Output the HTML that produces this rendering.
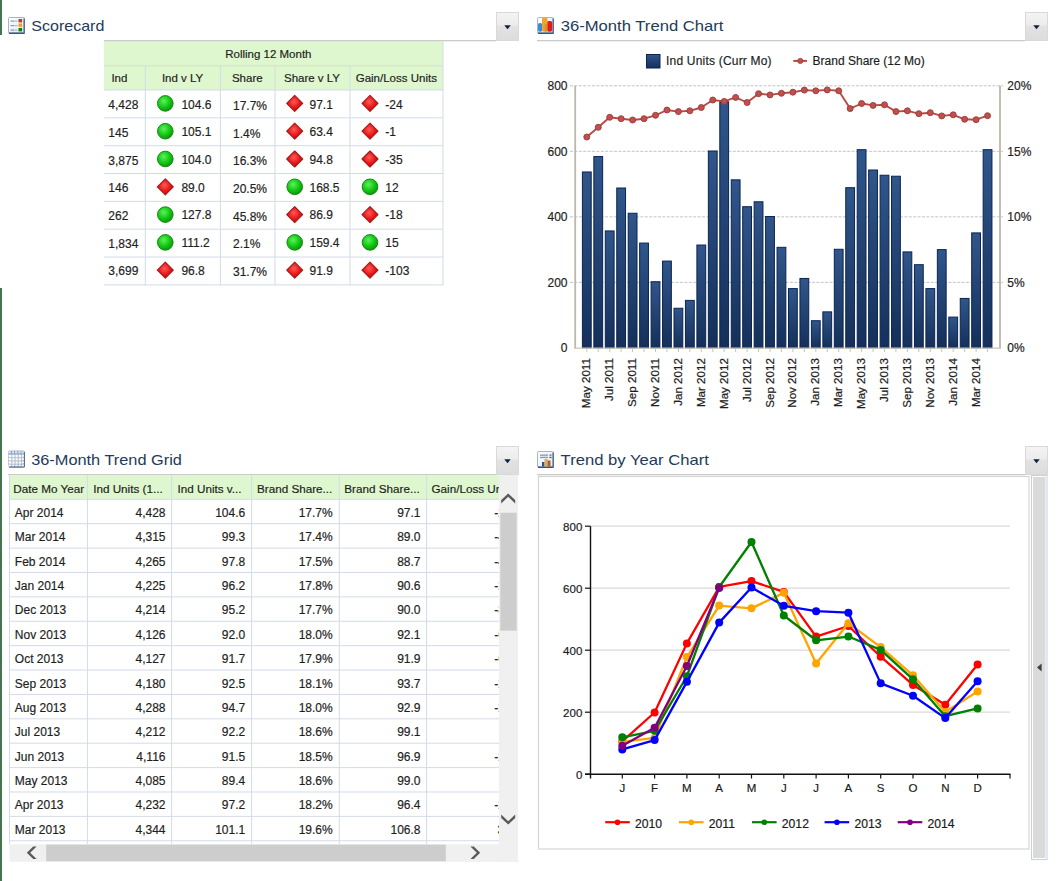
<!DOCTYPE html>
<html><head><meta charset="utf-8"><title>Dashboard</title>
<style>html,body{margin:0;padding:0;background:#fff;width:1057px;height:881px;overflow:hidden;position:relative;font-family:"Liberation Sans",sans-serif;}</style>
</head><body>
<svg width="1057" height="881" viewBox="0 0 1057 881" font-family="Liberation Sans, sans-serif" style="position:absolute;left:0;top:0">
<defs>
<linearGradient id="ddg" x1="0" y1="0" x2="0" y2="1">
<stop offset="0" stop-color="#f4f4f4"/><stop offset="0.45" stop-color="#ececec"/><stop offset="0.5" stop-color="#e2e2e2"/><stop offset="1" stop-color="#dcdcdc"/></linearGradient>
<linearGradient id="icbg" x1="0" y1="0" x2="1" y2="1">
<stop offset="0" stop-color="#ffffff"/><stop offset="1" stop-color="#dce8f6"/></linearGradient>
<linearGradient id="barg" x1="0" y1="0" x2="0" y2="1">
<stop offset="0" stop-color="#30568b"/><stop offset="1" stop-color="#14305a"/></linearGradient>
<radialGradient id="gcir" cx="0.4" cy="0.35" r="0.65">
<stop offset="0" stop-color="#5cf25c"/><stop offset="0.6" stop-color="#14c814"/><stop offset="1" stop-color="#0a9a0a"/></radialGradient>
<radialGradient id="rdia" cx="0.45" cy="0.4" r="0.6">
<stop offset="0" stop-color="#ff5a5a"/><stop offset="0.6" stop-color="#e81818"/><stop offset="1" stop-color="#b80c0c"/></radialGradient>
</defs>
<rect width="1057" height="881" fill="#ffffff"/>
<rect x="0" y="0" width="2" height="35" fill="#457550"/>
<rect x="0" y="288" width="2" height="593" fill="#457550"/>
<rect x="8.5" y="17.5" width="16" height="16" rx="1.2" fill="url(#icbg)" stroke="#a7b5c8" stroke-width="1"/>
<rect x="9" y="32.4" width="15.5" height="1.6" fill="#3b5379"/>
<rect x="23.4" y="18.5" width="1.6" height="15" fill="#5a6f92"/>
<rect x="18.5" y="19" width="3.6" height="3.4" fill="#c0392b"/>
<rect x="18.5" y="23.5" width="3.6" height="3.4" fill="#f0a020"/>
<rect x="18.5" y="28" width="3.6" height="3.4" fill="#1a7a1a"/>
<rect x="10.5" y="20.5" width="4" height="1.2" fill="#8a98aa"/><rect x="15" y="20.5" width="2.5" height="1.2" fill="#b0bac8"/>
<rect x="10.5" y="25" width="4" height="1.2" fill="#8a98aa"/><rect x="15" y="25" width="2.5" height="1.2" fill="#b0bac8"/>
<rect x="10.5" y="29.5" width="4" height="1.2" fill="#8a98aa"/><rect x="15" y="29.5" width="2.5" height="1.2" fill="#b0bac8"/>
<text x="0" y="0" font-size="14" fill="#233b5a" transform="translate(31.2,30.8) scale(1.148,1)">Scorecard</text>
<rect x="104" y="40" width="392" height="1.3" fill="#cbcbcb"/>
<rect x="104" y="41.2" width="339" height="0.9" fill="#cdd5e3"/>
<rect x="496" y="12" width="23" height="29" fill="url(#ddg)"/>
<rect x="496.5" y="12.5" width="22" height="28" fill="none" stroke="#d9d9d9" stroke-width="1"/>
<path d="M504.30 25.28 L510.70 25.28 L507.50 29.28 Z" fill="#0f1f45"/>
<rect x="104" y="41.3" width="339" height="48.7" fill="#dff7cf"/>
<rect x="104" y="65.2" width="339" height="1" fill="#d3dbe8"/>
<rect x="104" y="89.50" width="339" height="1" fill="#d3dbe8"/>
<rect x="104" y="117.34" width="339" height="1" fill="#d3dbe8"/>
<rect x="104" y="145.18" width="339" height="1" fill="#d3dbe8"/>
<rect x="104" y="173.02" width="339" height="1" fill="#d3dbe8"/>
<rect x="104" y="200.86" width="339" height="1" fill="#d3dbe8"/>
<rect x="104" y="228.70" width="339" height="1" fill="#d3dbe8"/>
<rect x="104" y="256.54" width="339" height="1" fill="#d3dbe8"/>
<rect x="104" y="284.38" width="339" height="1" fill="#d3dbe8"/>
<rect x="144.80" y="65.5" width="1" height="219.88" fill="#d3dbe8"/>
<rect x="219.90" y="65.5" width="1" height="219.88" fill="#d3dbe8"/>
<rect x="274.50" y="65.5" width="1" height="219.88" fill="#d3dbe8"/>
<rect x="349.50" y="65.5" width="1" height="219.88" fill="#d3dbe8"/>
<rect x="442.50" y="65.5" width="1" height="219.88" fill="#d3dbe8"/>
<rect x="442.5" y="41.3" width="1" height="24.5" fill="#d3dbe8"/>
<text x="225.20" y="58.00" font-size="11.5" fill="#1e1e1e" stroke="#1e1e1e" stroke-width="0.18" text-anchor="start" >Rolling 12 Month</text>
<text x="111.40" y="82.30" font-size="11.5" fill="#1e1e1e" stroke="#1e1e1e" stroke-width="0.18" text-anchor="start" >Ind</text>
<text x="182.60" y="82.30" font-size="11.5" fill="#1e1e1e" stroke="#1e1e1e" stroke-width="0.18" text-anchor="middle" >Ind v LY</text>
<text x="247.30" y="82.30" font-size="11.5" fill="#1e1e1e" stroke="#1e1e1e" stroke-width="0.18" text-anchor="middle" >Share</text>
<text x="312.00" y="82.30" font-size="11.5" fill="#1e1e1e" stroke="#1e1e1e" stroke-width="0.18" text-anchor="middle" >Share v LY</text>
<text x="396.30" y="82.30" font-size="11.5" fill="#1e1e1e" stroke="#1e1e1e" stroke-width="0.18" text-anchor="middle" >Gain/Loss Units</text>
<text x="108.30" y="109.40" font-size="12" fill="#1e1e1e" stroke="#1e1e1e" stroke-width="0.18" text-anchor="start" >4,428</text>
<circle cx="165.30" cy="103.40" r="7.8" fill="url(#gcir)" stroke="#138a13" stroke-width="1"/>
<text x="181.40" y="108.80" font-size="12" fill="#1e1e1e" stroke="#1e1e1e" stroke-width="0.18" text-anchor="start" >104.6</text>
<text x="233.00" y="110.00" font-size="12" fill="#1e1e1e" stroke="#1e1e1e" stroke-width="0.18" text-anchor="start" >17.7%</text>
<path d="M294.70 95.40 L302.70 103.40 L294.70 111.40 L286.70 103.40 Z" fill="url(#rdia)" stroke="#a81818" stroke-width="1.1" stroke-linejoin="round"/>
<text x="309.50" y="108.80" font-size="12" fill="#1e1e1e" stroke="#1e1e1e" stroke-width="0.18" text-anchor="start" >97.1</text>
<path d="M370.00 95.40 L378.00 103.40 L370.00 111.40 L362.00 103.40 Z" fill="url(#rdia)" stroke="#a81818" stroke-width="1.1" stroke-linejoin="round"/>
<text x="385.30" y="108.80" font-size="12" fill="#1e1e1e" stroke="#1e1e1e" stroke-width="0.18" text-anchor="start" >-24</text>
<text x="108.30" y="137.05" font-size="12" fill="#1e1e1e" stroke="#1e1e1e" stroke-width="0.18" text-anchor="start" >145</text>
<circle cx="165.30" cy="131.20" r="7.8" fill="url(#gcir)" stroke="#138a13" stroke-width="1"/>
<text x="181.40" y="136.45" font-size="12" fill="#1e1e1e" stroke="#1e1e1e" stroke-width="0.18" text-anchor="start" >105.1</text>
<text x="233.00" y="137.65" font-size="12" fill="#1e1e1e" stroke="#1e1e1e" stroke-width="0.18" text-anchor="start" >1.4%</text>
<path d="M294.70 123.20 L302.70 131.20 L294.70 139.20 L286.70 131.20 Z" fill="url(#rdia)" stroke="#a81818" stroke-width="1.1" stroke-linejoin="round"/>
<text x="309.50" y="136.45" font-size="12" fill="#1e1e1e" stroke="#1e1e1e" stroke-width="0.18" text-anchor="start" >63.4</text>
<path d="M370.00 123.20 L378.00 131.20 L370.00 139.20 L362.00 131.20 Z" fill="url(#rdia)" stroke="#a81818" stroke-width="1.1" stroke-linejoin="round"/>
<text x="385.30" y="136.45" font-size="12" fill="#1e1e1e" stroke="#1e1e1e" stroke-width="0.18" text-anchor="start" >-1</text>
<text x="108.30" y="164.70" font-size="12" fill="#1e1e1e" stroke="#1e1e1e" stroke-width="0.18" text-anchor="start" >3,875</text>
<circle cx="165.30" cy="159.00" r="7.8" fill="url(#gcir)" stroke="#138a13" stroke-width="1"/>
<text x="181.40" y="164.10" font-size="12" fill="#1e1e1e" stroke="#1e1e1e" stroke-width="0.18" text-anchor="start" >104.0</text>
<text x="233.00" y="165.30" font-size="12" fill="#1e1e1e" stroke="#1e1e1e" stroke-width="0.18" text-anchor="start" >16.3%</text>
<path d="M294.70 151.00 L302.70 159.00 L294.70 167.00 L286.70 159.00 Z" fill="url(#rdia)" stroke="#a81818" stroke-width="1.1" stroke-linejoin="round"/>
<text x="309.50" y="164.10" font-size="12" fill="#1e1e1e" stroke="#1e1e1e" stroke-width="0.18" text-anchor="start" >94.8</text>
<path d="M370.00 151.00 L378.00 159.00 L370.00 167.00 L362.00 159.00 Z" fill="url(#rdia)" stroke="#a81818" stroke-width="1.1" stroke-linejoin="round"/>
<text x="385.30" y="164.10" font-size="12" fill="#1e1e1e" stroke="#1e1e1e" stroke-width="0.18" text-anchor="start" >-35</text>
<text x="108.30" y="192.35" font-size="12" fill="#1e1e1e" stroke="#1e1e1e" stroke-width="0.18" text-anchor="start" >146</text>
<path d="M165.30 178.80 L173.30 186.80 L165.30 194.80 L157.30 186.80 Z" fill="url(#rdia)" stroke="#a81818" stroke-width="1.1" stroke-linejoin="round"/>
<text x="181.40" y="191.75" font-size="12" fill="#1e1e1e" stroke="#1e1e1e" stroke-width="0.18" text-anchor="start" >89.0</text>
<text x="233.00" y="192.95" font-size="12" fill="#1e1e1e" stroke="#1e1e1e" stroke-width="0.18" text-anchor="start" >20.5%</text>
<circle cx="294.70" cy="186.80" r="7.8" fill="url(#gcir)" stroke="#138a13" stroke-width="1"/>
<text x="309.50" y="191.75" font-size="12" fill="#1e1e1e" stroke="#1e1e1e" stroke-width="0.18" text-anchor="start" >168.5</text>
<circle cx="370.00" cy="186.80" r="7.8" fill="url(#gcir)" stroke="#138a13" stroke-width="1"/>
<text x="385.30" y="191.75" font-size="12" fill="#1e1e1e" stroke="#1e1e1e" stroke-width="0.18" text-anchor="start" >12</text>
<text x="108.30" y="220.00" font-size="12" fill="#1e1e1e" stroke="#1e1e1e" stroke-width="0.18" text-anchor="start" >262</text>
<circle cx="165.30" cy="214.60" r="7.8" fill="url(#gcir)" stroke="#138a13" stroke-width="1"/>
<text x="181.40" y="219.40" font-size="12" fill="#1e1e1e" stroke="#1e1e1e" stroke-width="0.18" text-anchor="start" >127.8</text>
<text x="233.00" y="220.60" font-size="12" fill="#1e1e1e" stroke="#1e1e1e" stroke-width="0.18" text-anchor="start" >45.8%</text>
<path d="M294.70 206.60 L302.70 214.60 L294.70 222.60 L286.70 214.60 Z" fill="url(#rdia)" stroke="#a81818" stroke-width="1.1" stroke-linejoin="round"/>
<text x="309.50" y="219.40" font-size="12" fill="#1e1e1e" stroke="#1e1e1e" stroke-width="0.18" text-anchor="start" >86.9</text>
<path d="M370.00 206.60 L378.00 214.60 L370.00 222.60 L362.00 214.60 Z" fill="url(#rdia)" stroke="#a81818" stroke-width="1.1" stroke-linejoin="round"/>
<text x="385.30" y="219.40" font-size="12" fill="#1e1e1e" stroke="#1e1e1e" stroke-width="0.18" text-anchor="start" >-18</text>
<text x="108.30" y="247.65" font-size="12" fill="#1e1e1e" stroke="#1e1e1e" stroke-width="0.18" text-anchor="start" >1,834</text>
<circle cx="165.30" cy="242.40" r="7.8" fill="url(#gcir)" stroke="#138a13" stroke-width="1"/>
<text x="181.40" y="247.05" font-size="12" fill="#1e1e1e" stroke="#1e1e1e" stroke-width="0.18" text-anchor="start" >111.2</text>
<text x="233.00" y="248.25" font-size="12" fill="#1e1e1e" stroke="#1e1e1e" stroke-width="0.18" text-anchor="start" >2.1%</text>
<circle cx="294.70" cy="242.40" r="7.8" fill="url(#gcir)" stroke="#138a13" stroke-width="1"/>
<text x="309.50" y="247.05" font-size="12" fill="#1e1e1e" stroke="#1e1e1e" stroke-width="0.18" text-anchor="start" >159.4</text>
<circle cx="370.00" cy="242.40" r="7.8" fill="url(#gcir)" stroke="#138a13" stroke-width="1"/>
<text x="385.30" y="247.05" font-size="12" fill="#1e1e1e" stroke="#1e1e1e" stroke-width="0.18" text-anchor="start" >15</text>
<text x="108.30" y="275.30" font-size="12" fill="#1e1e1e" stroke="#1e1e1e" stroke-width="0.18" text-anchor="start" >3,699</text>
<path d="M165.30 262.20 L173.30 270.20 L165.30 278.20 L157.30 270.20 Z" fill="url(#rdia)" stroke="#a81818" stroke-width="1.1" stroke-linejoin="round"/>
<text x="181.40" y="274.70" font-size="12" fill="#1e1e1e" stroke="#1e1e1e" stroke-width="0.18" text-anchor="start" >96.8</text>
<text x="233.00" y="275.90" font-size="12" fill="#1e1e1e" stroke="#1e1e1e" stroke-width="0.18" text-anchor="start" >31.7%</text>
<path d="M294.70 262.20 L302.70 270.20 L294.70 278.20 L286.70 270.20 Z" fill="url(#rdia)" stroke="#a81818" stroke-width="1.1" stroke-linejoin="round"/>
<text x="309.50" y="274.70" font-size="12" fill="#1e1e1e" stroke="#1e1e1e" stroke-width="0.18" text-anchor="start" >91.9</text>
<path d="M370.00 262.20 L378.00 270.20 L370.00 278.20 L362.00 270.20 Z" fill="url(#rdia)" stroke="#a81818" stroke-width="1.1" stroke-linejoin="round"/>
<text x="385.30" y="274.70" font-size="12" fill="#1e1e1e" stroke="#1e1e1e" stroke-width="0.18" text-anchor="start" >-103</text>
<rect x="537.5" y="17.5" width="16" height="16" rx="1.2" fill="url(#icbg)" stroke="#a7b5c8" stroke-width="1"/>
<rect x="538" y="32.4" width="15.5" height="1.6" fill="#3b5379"/>
<rect x="552.4" y="18.5" width="1.6" height="15" fill="#5a6f92"/>
<rect x="538" y="23" width="4.2" height="8.8" rx="1.8" fill="#3a8ad8"/>
<rect x="547" y="21" width="5.2" height="10.8" rx="1.8" fill="#e21a1a"/>
<rect x="542" y="17.5" width="5.5" height="14.3" rx="1.8" fill="#f0a428"/>
<rect x="544.8" y="24" width="2.2" height="7.5" fill="#c08a40" opacity="0.7"/>
<text x="0" y="0" font-size="14" fill="#233b5a" transform="translate(560.7,31) scale(1.189,1)">36-Month Trend Chart</text>
<rect x="537" y="40" width="488" height="1.3" fill="#cbcbcb"/>
<rect x="1025" y="12" width="23" height="29" fill="url(#ddg)"/>
<rect x="1025.5" y="12.5" width="22" height="28" fill="none" stroke="#d9d9d9" stroke-width="1"/>
<path d="M1033.30 25.28 L1039.70 25.28 L1036.50 29.28 Z" fill="#0f1f45"/>
<rect x="646.5" y="54.5" width="13.5" height="13.5" fill="url(#barg)" stroke="#0b2450" stroke-width="1"/>
<text x="666.00" y="64.90" font-size="12" fill="#1e1e1e" stroke="#1e1e1e" stroke-width="0.18" text-anchor="start" letter-spacing="0.2">Ind Units (Curr Mo)</text>
<line x1="793.3" y1="60.9" x2="807" y2="60.9" stroke="#b84a47" stroke-width="2"/>
<circle cx="800.3" cy="60.9" r="2.6" fill="#c0504d" stroke="#8c3533" stroke-width="0.6"/>
<text x="812.60" y="64.90" font-size="12" fill="#1e1e1e" stroke="#1e1e1e" stroke-width="0.18" text-anchor="start" >Brand Share (12 Mo)</text>
<line x1="570" y1="85.80" x2="1003" y2="85.80" stroke="#c4c4c4" stroke-width="1" stroke-dasharray="3,1.4"/>
<text x="567.50" y="90.10" font-size="12" fill="#1e1e1e" stroke="#1e1e1e" stroke-width="0.18" text-anchor="end" >800</text>
<line x1="570" y1="151.33" x2="1003" y2="151.33" stroke="#c4c4c4" stroke-width="1" stroke-dasharray="3,1.4"/>
<text x="567.50" y="155.63" font-size="12" fill="#1e1e1e" stroke="#1e1e1e" stroke-width="0.18" text-anchor="end" >600</text>
<line x1="570" y1="216.85" x2="1003" y2="216.85" stroke="#c4c4c4" stroke-width="1" stroke-dasharray="3,1.4"/>
<text x="567.50" y="221.15" font-size="12" fill="#1e1e1e" stroke="#1e1e1e" stroke-width="0.18" text-anchor="end" >400</text>
<line x1="570" y1="282.38" x2="1003" y2="282.38" stroke="#c4c4c4" stroke-width="1" stroke-dasharray="3,1.4"/>
<text x="567.50" y="286.68" font-size="12" fill="#1e1e1e" stroke="#1e1e1e" stroke-width="0.18" text-anchor="end" >200</text>
<text x="567.50" y="352.20" font-size="12" fill="#1e1e1e" stroke="#1e1e1e" stroke-width="0.18" text-anchor="end" >0</text>
<text x="1007.30" y="90.10" font-size="12" fill="#1e1e1e" stroke="#1e1e1e" stroke-width="0.18" text-anchor="start" >20%</text>
<text x="1007.30" y="155.62" font-size="12" fill="#1e1e1e" stroke="#1e1e1e" stroke-width="0.18" text-anchor="start" >15%</text>
<text x="1007.30" y="221.15" font-size="12" fill="#1e1e1e" stroke="#1e1e1e" stroke-width="0.18" text-anchor="start" >10%</text>
<text x="1007.30" y="286.68" font-size="12" fill="#1e1e1e" stroke="#1e1e1e" stroke-width="0.18" text-anchor="start" >5%</text>
<text x="1007.30" y="352.20" font-size="12" fill="#1e1e1e" stroke="#1e1e1e" stroke-width="0.18" text-anchor="start" >0%</text>
<rect x="582.40" y="171.97" width="8.8" height="175.93" fill="url(#barg)" stroke="#0b2450" stroke-width="1"/>
<rect x="593.85" y="156.57" width="8.8" height="191.33" fill="url(#barg)" stroke="#0b2450" stroke-width="1"/>
<rect x="605.30" y="230.94" width="8.8" height="116.96" fill="url(#barg)" stroke="#0b2450" stroke-width="1"/>
<rect x="616.75" y="188.02" width="8.8" height="159.88" fill="url(#barg)" stroke="#0b2450" stroke-width="1"/>
<rect x="628.20" y="213.25" width="8.8" height="134.65" fill="url(#barg)" stroke="#0b2450" stroke-width="1"/>
<rect x="639.65" y="243.06" width="8.8" height="104.84" fill="url(#barg)" stroke="#0b2450" stroke-width="1"/>
<rect x="651.10" y="281.72" width="8.8" height="66.18" fill="url(#barg)" stroke="#0b2450" stroke-width="1"/>
<rect x="662.55" y="261.08" width="8.8" height="86.82" fill="url(#barg)" stroke="#0b2450" stroke-width="1"/>
<rect x="674.00" y="308.26" width="8.8" height="39.64" fill="url(#barg)" stroke="#0b2450" stroke-width="1"/>
<rect x="685.45" y="300.39" width="8.8" height="47.51" fill="url(#barg)" stroke="#0b2450" stroke-width="1"/>
<rect x="696.90" y="245.03" width="8.8" height="102.87" fill="url(#barg)" stroke="#0b2450" stroke-width="1"/>
<rect x="708.35" y="151.00" width="8.8" height="196.90" fill="url(#barg)" stroke="#0b2450" stroke-width="1"/>
<rect x="719.80" y="101.85" width="8.8" height="246.05" fill="url(#barg)" stroke="#0b2450" stroke-width="1"/>
<rect x="731.25" y="179.83" width="8.8" height="168.07" fill="url(#barg)" stroke="#0b2450" stroke-width="1"/>
<rect x="742.70" y="206.69" width="8.8" height="141.21" fill="url(#barg)" stroke="#0b2450" stroke-width="1"/>
<rect x="754.15" y="201.78" width="8.8" height="146.12" fill="url(#barg)" stroke="#0b2450" stroke-width="1"/>
<rect x="765.60" y="216.52" width="8.8" height="131.38" fill="url(#barg)" stroke="#0b2450" stroke-width="1"/>
<rect x="777.05" y="247.32" width="8.8" height="100.58" fill="url(#barg)" stroke="#0b2450" stroke-width="1"/>
<rect x="788.50" y="288.60" width="8.8" height="59.30" fill="url(#barg)" stroke="#0b2450" stroke-width="1"/>
<rect x="799.95" y="278.44" width="8.8" height="69.46" fill="url(#barg)" stroke="#0b2450" stroke-width="1"/>
<rect x="811.40" y="320.71" width="8.8" height="27.19" fill="url(#barg)" stroke="#0b2450" stroke-width="1"/>
<rect x="822.85" y="311.86" width="8.8" height="36.04" fill="url(#barg)" stroke="#0b2450" stroke-width="1"/>
<rect x="834.30" y="249.28" width="8.8" height="98.62" fill="url(#barg)" stroke="#0b2450" stroke-width="1"/>
<rect x="845.75" y="187.69" width="8.8" height="160.21" fill="url(#barg)" stroke="#0b2450" stroke-width="1"/>
<rect x="857.20" y="149.69" width="8.8" height="198.21" fill="url(#barg)" stroke="#0b2450" stroke-width="1"/>
<rect x="868.65" y="170.00" width="8.8" height="177.90" fill="url(#barg)" stroke="#0b2450" stroke-width="1"/>
<rect x="880.10" y="175.24" width="8.8" height="172.66" fill="url(#barg)" stroke="#0b2450" stroke-width="1"/>
<rect x="891.55" y="176.22" width="8.8" height="171.68" fill="url(#barg)" stroke="#0b2450" stroke-width="1"/>
<rect x="903.00" y="251.91" width="8.8" height="95.99" fill="url(#barg)" stroke="#0b2450" stroke-width="1"/>
<rect x="914.45" y="264.68" width="8.8" height="83.22" fill="url(#barg)" stroke="#0b2450" stroke-width="1"/>
<rect x="925.90" y="288.60" width="8.8" height="59.30" fill="url(#barg)" stroke="#0b2450" stroke-width="1"/>
<rect x="937.35" y="249.61" width="8.8" height="98.29" fill="url(#barg)" stroke="#0b2450" stroke-width="1"/>
<rect x="948.80" y="317.10" width="8.8" height="30.80" fill="url(#barg)" stroke="#0b2450" stroke-width="1"/>
<rect x="960.25" y="298.43" width="8.8" height="49.47" fill="url(#barg)" stroke="#0b2450" stroke-width="1"/>
<rect x="971.70" y="232.90" width="8.8" height="115.00" fill="url(#barg)" stroke="#0b2450" stroke-width="1"/>
<rect x="983.15" y="149.69" width="8.8" height="198.21" fill="url(#barg)" stroke="#0b2450" stroke-width="1"/>
<line x1="575.2" y1="85.80" x2="575.2" y2="348.40" stroke="#bdb8a8" stroke-width="1.8"/>
<line x1="1000" y1="85.80" x2="1000" y2="348.40" stroke="#bdb8a8" stroke-width="1.8"/>
<line x1="574.3" y1="348.20" x2="1001" y2="348.20" stroke="#cbc6b8" stroke-width="1.3"/>
<line x1="586.80" y1="348.5" x2="586.80" y2="352" stroke="#c8c3b4" stroke-width="1"/>
<line x1="598.25" y1="348.5" x2="598.25" y2="352" stroke="#c8c3b4" stroke-width="1"/>
<line x1="609.70" y1="348.5" x2="609.70" y2="352" stroke="#c8c3b4" stroke-width="1"/>
<line x1="621.15" y1="348.5" x2="621.15" y2="352" stroke="#c8c3b4" stroke-width="1"/>
<line x1="632.60" y1="348.5" x2="632.60" y2="352" stroke="#c8c3b4" stroke-width="1"/>
<line x1="644.05" y1="348.5" x2="644.05" y2="352" stroke="#c8c3b4" stroke-width="1"/>
<line x1="655.50" y1="348.5" x2="655.50" y2="352" stroke="#c8c3b4" stroke-width="1"/>
<line x1="666.95" y1="348.5" x2="666.95" y2="352" stroke="#c8c3b4" stroke-width="1"/>
<line x1="678.40" y1="348.5" x2="678.40" y2="352" stroke="#c8c3b4" stroke-width="1"/>
<line x1="689.85" y1="348.5" x2="689.85" y2="352" stroke="#c8c3b4" stroke-width="1"/>
<line x1="701.30" y1="348.5" x2="701.30" y2="352" stroke="#c8c3b4" stroke-width="1"/>
<line x1="712.75" y1="348.5" x2="712.75" y2="352" stroke="#c8c3b4" stroke-width="1"/>
<line x1="724.20" y1="348.5" x2="724.20" y2="352" stroke="#c8c3b4" stroke-width="1"/>
<line x1="735.65" y1="348.5" x2="735.65" y2="352" stroke="#c8c3b4" stroke-width="1"/>
<line x1="747.10" y1="348.5" x2="747.10" y2="352" stroke="#c8c3b4" stroke-width="1"/>
<line x1="758.55" y1="348.5" x2="758.55" y2="352" stroke="#c8c3b4" stroke-width="1"/>
<line x1="770.00" y1="348.5" x2="770.00" y2="352" stroke="#c8c3b4" stroke-width="1"/>
<line x1="781.45" y1="348.5" x2="781.45" y2="352" stroke="#c8c3b4" stroke-width="1"/>
<line x1="792.90" y1="348.5" x2="792.90" y2="352" stroke="#c8c3b4" stroke-width="1"/>
<line x1="804.35" y1="348.5" x2="804.35" y2="352" stroke="#c8c3b4" stroke-width="1"/>
<line x1="815.80" y1="348.5" x2="815.80" y2="352" stroke="#c8c3b4" stroke-width="1"/>
<line x1="827.25" y1="348.5" x2="827.25" y2="352" stroke="#c8c3b4" stroke-width="1"/>
<line x1="838.70" y1="348.5" x2="838.70" y2="352" stroke="#c8c3b4" stroke-width="1"/>
<line x1="850.15" y1="348.5" x2="850.15" y2="352" stroke="#c8c3b4" stroke-width="1"/>
<line x1="861.60" y1="348.5" x2="861.60" y2="352" stroke="#c8c3b4" stroke-width="1"/>
<line x1="873.05" y1="348.5" x2="873.05" y2="352" stroke="#c8c3b4" stroke-width="1"/>
<line x1="884.50" y1="348.5" x2="884.50" y2="352" stroke="#c8c3b4" stroke-width="1"/>
<line x1="895.95" y1="348.5" x2="895.95" y2="352" stroke="#c8c3b4" stroke-width="1"/>
<line x1="907.40" y1="348.5" x2="907.40" y2="352" stroke="#c8c3b4" stroke-width="1"/>
<line x1="918.85" y1="348.5" x2="918.85" y2="352" stroke="#c8c3b4" stroke-width="1"/>
<line x1="930.30" y1="348.5" x2="930.30" y2="352" stroke="#c8c3b4" stroke-width="1"/>
<line x1="941.75" y1="348.5" x2="941.75" y2="352" stroke="#c8c3b4" stroke-width="1"/>
<line x1="953.20" y1="348.5" x2="953.20" y2="352" stroke="#c8c3b4" stroke-width="1"/>
<line x1="964.65" y1="348.5" x2="964.65" y2="352" stroke="#c8c3b4" stroke-width="1"/>
<line x1="976.10" y1="348.5" x2="976.10" y2="352" stroke="#c8c3b4" stroke-width="1"/>
<line x1="987.55" y1="348.5" x2="987.55" y2="352" stroke="#c8c3b4" stroke-width="1"/>
<polyline points="586.80,137.00 598.25,127.30 609.70,117.30 621.15,118.70 632.60,120.00 644.05,118.70 655.50,115.30 666.95,110.00 678.40,111.60 689.85,110.80 701.30,107.50 712.75,100.00 724.20,101.40 735.65,97.40 747.10,102.50 758.55,93.70 770.00,94.90 781.45,93.30 792.90,92.20 804.35,90.10 815.80,90.80 827.25,89.90 838.70,90.80 850.15,108.60 861.60,103.50 873.05,105.40 884.50,104.80 895.95,111.60 907.40,110.80 918.85,113.70 930.30,112.70 941.75,115.90 953.20,114.80 964.65,119.30 976.10,119.70 987.55,115.70" fill="none" stroke="#b84a47" stroke-width="1.9" stroke-linejoin="round"/>
<circle cx="586.80" cy="137.00" r="3.0" fill="#c0504d" stroke="#973b38" stroke-width="0.9"/>
<circle cx="598.25" cy="127.30" r="3.0" fill="#c0504d" stroke="#973b38" stroke-width="0.9"/>
<circle cx="609.70" cy="117.30" r="3.0" fill="#c0504d" stroke="#973b38" stroke-width="0.9"/>
<circle cx="621.15" cy="118.70" r="3.0" fill="#c0504d" stroke="#973b38" stroke-width="0.9"/>
<circle cx="632.60" cy="120.00" r="3.0" fill="#c0504d" stroke="#973b38" stroke-width="0.9"/>
<circle cx="644.05" cy="118.70" r="3.0" fill="#c0504d" stroke="#973b38" stroke-width="0.9"/>
<circle cx="655.50" cy="115.30" r="3.0" fill="#c0504d" stroke="#973b38" stroke-width="0.9"/>
<circle cx="666.95" cy="110.00" r="3.0" fill="#c0504d" stroke="#973b38" stroke-width="0.9"/>
<circle cx="678.40" cy="111.60" r="3.0" fill="#c0504d" stroke="#973b38" stroke-width="0.9"/>
<circle cx="689.85" cy="110.80" r="3.0" fill="#c0504d" stroke="#973b38" stroke-width="0.9"/>
<circle cx="701.30" cy="107.50" r="3.0" fill="#c0504d" stroke="#973b38" stroke-width="0.9"/>
<circle cx="712.75" cy="100.00" r="3.0" fill="#c0504d" stroke="#973b38" stroke-width="0.9"/>
<circle cx="724.20" cy="101.40" r="3.0" fill="#c0504d" stroke="#973b38" stroke-width="0.9"/>
<circle cx="735.65" cy="97.40" r="3.0" fill="#c0504d" stroke="#973b38" stroke-width="0.9"/>
<circle cx="747.10" cy="102.50" r="3.0" fill="#c0504d" stroke="#973b38" stroke-width="0.9"/>
<circle cx="758.55" cy="93.70" r="3.0" fill="#c0504d" stroke="#973b38" stroke-width="0.9"/>
<circle cx="770.00" cy="94.90" r="3.0" fill="#c0504d" stroke="#973b38" stroke-width="0.9"/>
<circle cx="781.45" cy="93.30" r="3.0" fill="#c0504d" stroke="#973b38" stroke-width="0.9"/>
<circle cx="792.90" cy="92.20" r="3.0" fill="#c0504d" stroke="#973b38" stroke-width="0.9"/>
<circle cx="804.35" cy="90.10" r="3.0" fill="#c0504d" stroke="#973b38" stroke-width="0.9"/>
<circle cx="815.80" cy="90.80" r="3.0" fill="#c0504d" stroke="#973b38" stroke-width="0.9"/>
<circle cx="827.25" cy="89.90" r="3.0" fill="#c0504d" stroke="#973b38" stroke-width="0.9"/>
<circle cx="838.70" cy="90.80" r="3.0" fill="#c0504d" stroke="#973b38" stroke-width="0.9"/>
<circle cx="850.15" cy="108.60" r="3.0" fill="#c0504d" stroke="#973b38" stroke-width="0.9"/>
<circle cx="861.60" cy="103.50" r="3.0" fill="#c0504d" stroke="#973b38" stroke-width="0.9"/>
<circle cx="873.05" cy="105.40" r="3.0" fill="#c0504d" stroke="#973b38" stroke-width="0.9"/>
<circle cx="884.50" cy="104.80" r="3.0" fill="#c0504d" stroke="#973b38" stroke-width="0.9"/>
<circle cx="895.95" cy="111.60" r="3.0" fill="#c0504d" stroke="#973b38" stroke-width="0.9"/>
<circle cx="907.40" cy="110.80" r="3.0" fill="#c0504d" stroke="#973b38" stroke-width="0.9"/>
<circle cx="918.85" cy="113.70" r="3.0" fill="#c0504d" stroke="#973b38" stroke-width="0.9"/>
<circle cx="930.30" cy="112.70" r="3.0" fill="#c0504d" stroke="#973b38" stroke-width="0.9"/>
<circle cx="941.75" cy="115.90" r="3.0" fill="#c0504d" stroke="#973b38" stroke-width="0.9"/>
<circle cx="953.20" cy="114.80" r="3.0" fill="#c0504d" stroke="#973b38" stroke-width="0.9"/>
<circle cx="964.65" cy="119.30" r="3.0" fill="#c0504d" stroke="#973b38" stroke-width="0.9"/>
<circle cx="976.10" cy="119.70" r="3.0" fill="#c0504d" stroke="#973b38" stroke-width="0.9"/>
<circle cx="987.55" cy="115.70" r="3.0" fill="#c0504d" stroke="#973b38" stroke-width="0.9"/>
<text x="0" y="0" font-size="11.6" fill="#1e1e1e" stroke="#1e1e1e" stroke-width="0.22" text-anchor="end" transform="translate(590.30,358.1) rotate(-90)">May 2011</text>
<text x="0" y="0" font-size="11.6" fill="#1e1e1e" stroke="#1e1e1e" stroke-width="0.22" text-anchor="end" transform="translate(613.20,358.1) rotate(-90)">Jul 2011</text>
<text x="0" y="0" font-size="11.6" fill="#1e1e1e" stroke="#1e1e1e" stroke-width="0.22" text-anchor="end" transform="translate(636.10,358.1) rotate(-90)">Sep 2011</text>
<text x="0" y="0" font-size="11.6" fill="#1e1e1e" stroke="#1e1e1e" stroke-width="0.22" text-anchor="end" transform="translate(659.00,358.1) rotate(-90)">Nov 2011</text>
<text x="0" y="0" font-size="11.6" fill="#1e1e1e" stroke="#1e1e1e" stroke-width="0.22" text-anchor="end" transform="translate(681.90,358.1) rotate(-90)">Jan 2012</text>
<text x="0" y="0" font-size="11.6" fill="#1e1e1e" stroke="#1e1e1e" stroke-width="0.22" text-anchor="end" transform="translate(704.80,358.1) rotate(-90)">Mar 2012</text>
<text x="0" y="0" font-size="11.6" fill="#1e1e1e" stroke="#1e1e1e" stroke-width="0.22" text-anchor="end" transform="translate(727.70,358.1) rotate(-90)">May 2012</text>
<text x="0" y="0" font-size="11.6" fill="#1e1e1e" stroke="#1e1e1e" stroke-width="0.22" text-anchor="end" transform="translate(750.60,358.1) rotate(-90)">Jul 2012</text>
<text x="0" y="0" font-size="11.6" fill="#1e1e1e" stroke="#1e1e1e" stroke-width="0.22" text-anchor="end" transform="translate(773.50,358.1) rotate(-90)">Sep 2012</text>
<text x="0" y="0" font-size="11.6" fill="#1e1e1e" stroke="#1e1e1e" stroke-width="0.22" text-anchor="end" transform="translate(796.40,358.1) rotate(-90)">Nov 2012</text>
<text x="0" y="0" font-size="11.6" fill="#1e1e1e" stroke="#1e1e1e" stroke-width="0.22" text-anchor="end" transform="translate(819.30,358.1) rotate(-90)">Jan 2013</text>
<text x="0" y="0" font-size="11.6" fill="#1e1e1e" stroke="#1e1e1e" stroke-width="0.22" text-anchor="end" transform="translate(842.20,358.1) rotate(-90)">Mar 2013</text>
<text x="0" y="0" font-size="11.6" fill="#1e1e1e" stroke="#1e1e1e" stroke-width="0.22" text-anchor="end" transform="translate(865.10,358.1) rotate(-90)">May 2013</text>
<text x="0" y="0" font-size="11.6" fill="#1e1e1e" stroke="#1e1e1e" stroke-width="0.22" text-anchor="end" transform="translate(888.00,358.1) rotate(-90)">Jul 2013</text>
<text x="0" y="0" font-size="11.6" fill="#1e1e1e" stroke="#1e1e1e" stroke-width="0.22" text-anchor="end" transform="translate(910.90,358.1) rotate(-90)">Sep 2013</text>
<text x="0" y="0" font-size="11.6" fill="#1e1e1e" stroke="#1e1e1e" stroke-width="0.22" text-anchor="end" transform="translate(933.80,358.1) rotate(-90)">Nov 2013</text>
<text x="0" y="0" font-size="11.6" fill="#1e1e1e" stroke="#1e1e1e" stroke-width="0.22" text-anchor="end" transform="translate(956.70,358.1) rotate(-90)">Jan 2014</text>
<text x="0" y="0" font-size="11.6" fill="#1e1e1e" stroke="#1e1e1e" stroke-width="0.22" text-anchor="end" transform="translate(979.60,358.1) rotate(-90)">Mar 2014</text>
<rect x="8.5" y="451.0" width="16" height="16" rx="1.2" fill="url(#icbg)" stroke="#a7b5c8" stroke-width="1"/>
<rect x="9" y="465.9" width="15.5" height="1.6" fill="#3b5379"/>
<rect x="23.4" y="452.0" width="1.6" height="15" fill="#5a6f92"/>
<rect x="9" y="451" width="15.2" height="3.4" fill="#6e9ad6"/>
<rect x="8.60" y="451.20" width="2.4" height="2.3" fill="#cfe6ff"/>
<rect x="8.60" y="454.45" width="2.4" height="2.3" fill="#ffffff"/>
<rect x="8.60" y="457.70" width="2.4" height="2.3" fill="#ffffff"/>
<rect x="8.60" y="460.95" width="2.4" height="2.3" fill="#ffffff"/>
<rect x="8.60" y="464.20" width="2.4" height="2.3" fill="#ffffff"/>
<rect x="11.80" y="451.20" width="2.4" height="2.3" fill="#cfe6ff"/>
<rect x="11.80" y="454.45" width="2.4" height="2.3" fill="#ffffff"/>
<rect x="11.80" y="457.70" width="2.4" height="2.3" fill="#ffffff"/>
<rect x="11.80" y="460.95" width="2.4" height="2.3" fill="#ffffff"/>
<rect x="11.80" y="464.20" width="2.4" height="2.3" fill="#ffffff"/>
<rect x="15.00" y="451.20" width="2.4" height="2.3" fill="#cfe6ff"/>
<rect x="15.00" y="454.45" width="2.4" height="2.3" fill="#ffffff"/>
<rect x="15.00" y="457.70" width="2.4" height="2.3" fill="#ffffff"/>
<rect x="15.00" y="460.95" width="2.4" height="2.3" fill="#ffffff"/>
<rect x="15.00" y="464.20" width="2.4" height="2.3" fill="#ffffff"/>
<rect x="18.20" y="451.20" width="2.4" height="2.3" fill="#cfe6ff"/>
<rect x="18.20" y="454.45" width="2.4" height="2.3" fill="#ffffff"/>
<rect x="18.20" y="457.70" width="2.4" height="2.3" fill="#ffffff"/>
<rect x="18.20" y="460.95" width="2.4" height="2.3" fill="#ffffff"/>
<rect x="18.20" y="464.20" width="2.4" height="2.3" fill="#ffffff"/>
<rect x="21.40" y="451.20" width="2.4" height="2.3" fill="#cfe6ff"/>
<rect x="21.40" y="454.45" width="2.4" height="2.3" fill="#ffffff"/>
<rect x="21.40" y="457.70" width="2.4" height="2.3" fill="#ffffff"/>
<rect x="21.40" y="460.95" width="2.4" height="2.3" fill="#ffffff"/>
<rect x="21.40" y="464.20" width="2.4" height="2.3" fill="#ffffff"/>
<rect x="11.40" y="454.4" width="0.9" height="12" fill="#aebacb"/>
<rect x="14.60" y="454.4" width="0.9" height="12" fill="#aebacb"/>
<rect x="17.80" y="454.4" width="0.9" height="12" fill="#aebacb"/>
<rect x="21.00" y="454.4" width="0.9" height="12" fill="#aebacb"/>
<rect x="9" y="454.05" width="15" height="0.9" fill="#aebacb"/>
<rect x="9" y="457.30" width="15" height="0.9" fill="#aebacb"/>
<rect x="9" y="460.55" width="15" height="0.9" fill="#aebacb"/>
<rect x="9" y="463.80" width="15" height="0.9" fill="#aebacb"/>
<text x="0" y="0" font-size="14" fill="#233b5a" transform="translate(31.2,464.8) scale(1.167,1)">36-Month Trend Grid</text>
<rect x="8" y="474" width="488" height="1.3" fill="#cbcbcb"/>
<rect x="496" y="446" width="23" height="29" fill="url(#ddg)"/>
<rect x="496.5" y="446.5" width="22" height="28" fill="none" stroke="#d9d9d9" stroke-width="1"/>
<path d="M504.30 459.28 L510.70 459.28 L507.50 463.28 Z" fill="#0f1f45"/>
<rect x="9.5" y="475.3" width="489.5" height="23.9" fill="#dff7cf"/>
<rect x="9.0" y="475.3" width="1" height="368.7" fill="#d3dbe8"/>
<rect x="9.5" y="498.80" width="489.5" height="1" fill="#d3dbe8"/>
<rect x="9.5" y="523.19" width="489.5" height="1" fill="#d3dbe8"/>
<rect x="9.5" y="547.58" width="489.5" height="1" fill="#d3dbe8"/>
<rect x="9.5" y="571.97" width="489.5" height="1" fill="#d3dbe8"/>
<rect x="9.5" y="596.36" width="489.5" height="1" fill="#d3dbe8"/>
<rect x="9.5" y="620.75" width="489.5" height="1" fill="#d3dbe8"/>
<rect x="9.5" y="645.14" width="489.5" height="1" fill="#d3dbe8"/>
<rect x="9.5" y="669.53" width="489.5" height="1" fill="#d3dbe8"/>
<rect x="9.5" y="693.92" width="489.5" height="1" fill="#d3dbe8"/>
<rect x="9.5" y="718.31" width="489.5" height="1" fill="#d3dbe8"/>
<rect x="9.5" y="742.70" width="489.5" height="1" fill="#d3dbe8"/>
<rect x="9.5" y="767.09" width="489.5" height="1" fill="#d3dbe8"/>
<rect x="9.5" y="791.48" width="489.5" height="1" fill="#d3dbe8"/>
<rect x="9.5" y="815.87" width="489.5" height="1" fill="#d3dbe8"/>
<rect x="9.5" y="840.26" width="489.5" height="1" fill="#d3dbe8"/>
<rect x="86.90" y="475.3" width="1" height="368.70" fill="#d3dbe8"/>
<rect x="171.10" y="475.3" width="1" height="368.70" fill="#d3dbe8"/>
<rect x="251.10" y="475.3" width="1" height="368.70" fill="#d3dbe8"/>
<rect x="338.80" y="475.3" width="1" height="368.70" fill="#d3dbe8"/>
<rect x="426.10" y="475.3" width="1" height="368.70" fill="#d3dbe8"/>
<clipPath id="gclip"><rect x="9" y="470" width="490" height="380"/></clipPath>
<g clip-path="url(#gclip)">
<text x="13.30" y="493.10" font-size="11.7" fill="#1e1e1e" stroke="#1e1e1e" stroke-width="0.18" text-anchor="start" >Date Mo Year</text>
<text x="93.20" y="493.10" font-size="11.7" fill="#1e1e1e" stroke="#1e1e1e" stroke-width="0.18" text-anchor="start" >Ind Units (1...</text>
<text x="177.50" y="493.10" font-size="11.7" fill="#1e1e1e" stroke="#1e1e1e" stroke-width="0.18" text-anchor="start" >Ind Units v...</text>
<text x="257.00" y="493.10" font-size="11.7" fill="#1e1e1e" stroke="#1e1e1e" stroke-width="0.18" text-anchor="start" >Brand Share...</text>
<text x="344.30" y="493.10" font-size="11.7" fill="#1e1e1e" stroke="#1e1e1e" stroke-width="0.18" text-anchor="start" >Brand Share...</text>
<text x="431.50" y="493.10" font-size="11.7" fill="#1e1e1e" stroke="#1e1e1e" stroke-width="0.18" text-anchor="start" >Gain/Loss Units</text>
<text x="14.80" y="517.10" font-size="12" fill="#1e1e1e" stroke="#1e1e1e" stroke-width="0.18" text-anchor="start" >Apr 2014</text>
<text x="165.50" y="517.10" font-size="12" fill="#1e1e1e" stroke="#1e1e1e" stroke-width="0.18" text-anchor="end" >4,428</text>
<text x="245.20" y="517.10" font-size="12" fill="#1e1e1e" stroke="#1e1e1e" stroke-width="0.18" text-anchor="end" >104.6</text>
<text x="332.70" y="517.10" font-size="12" fill="#1e1e1e" stroke="#1e1e1e" stroke-width="0.18" text-anchor="end" >17.7%</text>
<text x="420.50" y="517.10" font-size="12" fill="#1e1e1e" stroke="#1e1e1e" stroke-width="0.18" text-anchor="end" >97.1</text>
<text x="494.20" y="517.10" font-size="12" fill="#1e1e1e" stroke="#1e1e1e" stroke-width="0.18" text-anchor="start" >-24</text>
<text x="14.80" y="541.44" font-size="12" fill="#1e1e1e" stroke="#1e1e1e" stroke-width="0.18" text-anchor="start" >Mar 2014</text>
<text x="165.50" y="541.44" font-size="12" fill="#1e1e1e" stroke="#1e1e1e" stroke-width="0.18" text-anchor="end" >4,315</text>
<text x="245.20" y="541.44" font-size="12" fill="#1e1e1e" stroke="#1e1e1e" stroke-width="0.18" text-anchor="end" >99.3</text>
<text x="332.70" y="541.44" font-size="12" fill="#1e1e1e" stroke="#1e1e1e" stroke-width="0.18" text-anchor="end" >17.4%</text>
<text x="420.50" y="541.44" font-size="12" fill="#1e1e1e" stroke="#1e1e1e" stroke-width="0.18" text-anchor="end" >89.0</text>
<text x="494.20" y="541.44" font-size="12" fill="#1e1e1e" stroke="#1e1e1e" stroke-width="0.18" text-anchor="start" >-47</text>
<text x="14.80" y="565.79" font-size="12" fill="#1e1e1e" stroke="#1e1e1e" stroke-width="0.18" text-anchor="start" >Feb 2014</text>
<text x="165.50" y="565.79" font-size="12" fill="#1e1e1e" stroke="#1e1e1e" stroke-width="0.18" text-anchor="end" >4,265</text>
<text x="245.20" y="565.79" font-size="12" fill="#1e1e1e" stroke="#1e1e1e" stroke-width="0.18" text-anchor="end" >97.8</text>
<text x="332.70" y="565.79" font-size="12" fill="#1e1e1e" stroke="#1e1e1e" stroke-width="0.18" text-anchor="end" >17.5%</text>
<text x="420.50" y="565.79" font-size="12" fill="#1e1e1e" stroke="#1e1e1e" stroke-width="0.18" text-anchor="end" >88.7</text>
<text x="494.20" y="565.79" font-size="12" fill="#1e1e1e" stroke="#1e1e1e" stroke-width="0.18" text-anchor="start" >-44</text>
<text x="14.80" y="590.13" font-size="12" fill="#1e1e1e" stroke="#1e1e1e" stroke-width="0.18" text-anchor="start" >Jan 2014</text>
<text x="165.50" y="590.13" font-size="12" fill="#1e1e1e" stroke="#1e1e1e" stroke-width="0.18" text-anchor="end" >4,225</text>
<text x="245.20" y="590.13" font-size="12" fill="#1e1e1e" stroke="#1e1e1e" stroke-width="0.18" text-anchor="end" >96.2</text>
<text x="332.70" y="590.13" font-size="12" fill="#1e1e1e" stroke="#1e1e1e" stroke-width="0.18" text-anchor="end" >17.8%</text>
<text x="420.50" y="590.13" font-size="12" fill="#1e1e1e" stroke="#1e1e1e" stroke-width="0.18" text-anchor="end" >90.6</text>
<text x="494.20" y="590.13" font-size="12" fill="#1e1e1e" stroke="#1e1e1e" stroke-width="0.18" text-anchor="start" >-21</text>
<text x="14.80" y="614.48" font-size="12" fill="#1e1e1e" stroke="#1e1e1e" stroke-width="0.18" text-anchor="start" >Dec 2013</text>
<text x="165.50" y="614.48" font-size="12" fill="#1e1e1e" stroke="#1e1e1e" stroke-width="0.18" text-anchor="end" >4,214</text>
<text x="245.20" y="614.48" font-size="12" fill="#1e1e1e" stroke="#1e1e1e" stroke-width="0.18" text-anchor="end" >95.2</text>
<text x="332.70" y="614.48" font-size="12" fill="#1e1e1e" stroke="#1e1e1e" stroke-width="0.18" text-anchor="end" >17.7%</text>
<text x="420.50" y="614.48" font-size="12" fill="#1e1e1e" stroke="#1e1e1e" stroke-width="0.18" text-anchor="end" >90.0</text>
<text x="494.20" y="614.48" font-size="12" fill="#1e1e1e" stroke="#1e1e1e" stroke-width="0.18" text-anchor="start" >-82</text>
<text x="14.80" y="638.82" font-size="12" fill="#1e1e1e" stroke="#1e1e1e" stroke-width="0.18" text-anchor="start" >Nov 2013</text>
<text x="165.50" y="638.82" font-size="12" fill="#1e1e1e" stroke="#1e1e1e" stroke-width="0.18" text-anchor="end" >4,126</text>
<text x="245.20" y="638.82" font-size="12" fill="#1e1e1e" stroke="#1e1e1e" stroke-width="0.18" text-anchor="end" >92.0</text>
<text x="332.70" y="638.82" font-size="12" fill="#1e1e1e" stroke="#1e1e1e" stroke-width="0.18" text-anchor="end" >18.0%</text>
<text x="420.50" y="638.82" font-size="12" fill="#1e1e1e" stroke="#1e1e1e" stroke-width="0.18" text-anchor="end" >92.1</text>
<text x="494.20" y="638.82" font-size="12" fill="#1e1e1e" stroke="#1e1e1e" stroke-width="0.18" text-anchor="start" >-63</text>
<text x="14.80" y="663.17" font-size="12" fill="#1e1e1e" stroke="#1e1e1e" stroke-width="0.18" text-anchor="start" >Oct 2013</text>
<text x="165.50" y="663.17" font-size="12" fill="#1e1e1e" stroke="#1e1e1e" stroke-width="0.18" text-anchor="end" >4,127</text>
<text x="245.20" y="663.17" font-size="12" fill="#1e1e1e" stroke="#1e1e1e" stroke-width="0.18" text-anchor="end" >91.7</text>
<text x="332.70" y="663.17" font-size="12" fill="#1e1e1e" stroke="#1e1e1e" stroke-width="0.18" text-anchor="end" >17.9%</text>
<text x="420.50" y="663.17" font-size="12" fill="#1e1e1e" stroke="#1e1e1e" stroke-width="0.18" text-anchor="end" >91.9</text>
<text x="494.20" y="663.17" font-size="12" fill="#1e1e1e" stroke="#1e1e1e" stroke-width="0.18" text-anchor="start" >-64</text>
<text x="14.80" y="687.51" font-size="12" fill="#1e1e1e" stroke="#1e1e1e" stroke-width="0.18" text-anchor="start" >Sep 2013</text>
<text x="165.50" y="687.51" font-size="12" fill="#1e1e1e" stroke="#1e1e1e" stroke-width="0.18" text-anchor="end" >4,180</text>
<text x="245.20" y="687.51" font-size="12" fill="#1e1e1e" stroke="#1e1e1e" stroke-width="0.18" text-anchor="end" >92.5</text>
<text x="332.70" y="687.51" font-size="12" fill="#1e1e1e" stroke="#1e1e1e" stroke-width="0.18" text-anchor="end" >18.1%</text>
<text x="420.50" y="687.51" font-size="12" fill="#1e1e1e" stroke="#1e1e1e" stroke-width="0.18" text-anchor="end" >93.7</text>
<text x="494.20" y="687.51" font-size="12" fill="#1e1e1e" stroke="#1e1e1e" stroke-width="0.18" text-anchor="start" >-22</text>
<text x="14.80" y="711.86" font-size="12" fill="#1e1e1e" stroke="#1e1e1e" stroke-width="0.18" text-anchor="start" >Aug 2013</text>
<text x="165.50" y="711.86" font-size="12" fill="#1e1e1e" stroke="#1e1e1e" stroke-width="0.18" text-anchor="end" >4,288</text>
<text x="245.20" y="711.86" font-size="12" fill="#1e1e1e" stroke="#1e1e1e" stroke-width="0.18" text-anchor="end" >94.7</text>
<text x="332.70" y="711.86" font-size="12" fill="#1e1e1e" stroke="#1e1e1e" stroke-width="0.18" text-anchor="end" >18.0%</text>
<text x="420.50" y="711.86" font-size="12" fill="#1e1e1e" stroke="#1e1e1e" stroke-width="0.18" text-anchor="end" >92.9</text>
<text x="494.20" y="711.86" font-size="12" fill="#1e1e1e" stroke="#1e1e1e" stroke-width="0.18" text-anchor="start" >-23</text>
<text x="14.80" y="736.20" font-size="12" fill="#1e1e1e" stroke="#1e1e1e" stroke-width="0.18" text-anchor="start" >Jul 2013</text>
<text x="165.50" y="736.20" font-size="12" fill="#1e1e1e" stroke="#1e1e1e" stroke-width="0.18" text-anchor="end" >4,212</text>
<text x="245.20" y="736.20" font-size="12" fill="#1e1e1e" stroke="#1e1e1e" stroke-width="0.18" text-anchor="end" >92.2</text>
<text x="332.70" y="736.20" font-size="12" fill="#1e1e1e" stroke="#1e1e1e" stroke-width="0.18" text-anchor="end" >18.6%</text>
<text x="420.50" y="736.20" font-size="12" fill="#1e1e1e" stroke="#1e1e1e" stroke-width="0.18" text-anchor="end" >99.1</text>
<text x="14.80" y="760.55" font-size="12" fill="#1e1e1e" stroke="#1e1e1e" stroke-width="0.18" text-anchor="start" >Jun 2013</text>
<text x="165.50" y="760.55" font-size="12" fill="#1e1e1e" stroke="#1e1e1e" stroke-width="0.18" text-anchor="end" >4,116</text>
<text x="245.20" y="760.55" font-size="12" fill="#1e1e1e" stroke="#1e1e1e" stroke-width="0.18" text-anchor="end" >91.5</text>
<text x="332.70" y="760.55" font-size="12" fill="#1e1e1e" stroke="#1e1e1e" stroke-width="0.18" text-anchor="end" >18.5%</text>
<text x="420.50" y="760.55" font-size="12" fill="#1e1e1e" stroke="#1e1e1e" stroke-width="0.18" text-anchor="end" >96.9</text>
<text x="494.20" y="760.55" font-size="12" fill="#1e1e1e" stroke="#1e1e1e" stroke-width="0.18" text-anchor="start" >-27</text>
<text x="14.80" y="784.89" font-size="12" fill="#1e1e1e" stroke="#1e1e1e" stroke-width="0.18" text-anchor="start" >May 2013</text>
<text x="165.50" y="784.89" font-size="12" fill="#1e1e1e" stroke="#1e1e1e" stroke-width="0.18" text-anchor="end" >4,085</text>
<text x="245.20" y="784.89" font-size="12" fill="#1e1e1e" stroke="#1e1e1e" stroke-width="0.18" text-anchor="end" >89.4</text>
<text x="332.70" y="784.89" font-size="12" fill="#1e1e1e" stroke="#1e1e1e" stroke-width="0.18" text-anchor="end" >18.6%</text>
<text x="420.50" y="784.89" font-size="12" fill="#1e1e1e" stroke="#1e1e1e" stroke-width="0.18" text-anchor="end" >99.0</text>
<text x="14.80" y="809.24" font-size="12" fill="#1e1e1e" stroke="#1e1e1e" stroke-width="0.18" text-anchor="start" >Apr 2013</text>
<text x="165.50" y="809.24" font-size="12" fill="#1e1e1e" stroke="#1e1e1e" stroke-width="0.18" text-anchor="end" >4,232</text>
<text x="245.20" y="809.24" font-size="12" fill="#1e1e1e" stroke="#1e1e1e" stroke-width="0.18" text-anchor="end" >97.2</text>
<text x="332.70" y="809.24" font-size="12" fill="#1e1e1e" stroke="#1e1e1e" stroke-width="0.18" text-anchor="end" >18.2%</text>
<text x="420.50" y="809.24" font-size="12" fill="#1e1e1e" stroke="#1e1e1e" stroke-width="0.18" text-anchor="end" >96.4</text>
<text x="494.20" y="809.24" font-size="12" fill="#1e1e1e" stroke="#1e1e1e" stroke-width="0.18" text-anchor="start" >-22</text>
<text x="14.80" y="833.59" font-size="12" fill="#1e1e1e" stroke="#1e1e1e" stroke-width="0.18" text-anchor="start" >Mar 2013</text>
<text x="165.50" y="833.59" font-size="12" fill="#1e1e1e" stroke="#1e1e1e" stroke-width="0.18" text-anchor="end" >4,344</text>
<text x="245.20" y="833.59" font-size="12" fill="#1e1e1e" stroke="#1e1e1e" stroke-width="0.18" text-anchor="end" >101.1</text>
<text x="332.70" y="833.59" font-size="12" fill="#1e1e1e" stroke="#1e1e1e" stroke-width="0.18" text-anchor="end" >19.6%</text>
<text x="420.50" y="833.59" font-size="12" fill="#1e1e1e" stroke="#1e1e1e" stroke-width="0.18" text-anchor="end" >106.8</text>
<text x="497.40" y="833.59" font-size="12" fill="#1e1e1e" stroke="#1e1e1e" stroke-width="0.18" text-anchor="start" >35</text>
</g>
<rect x="499" y="475" width="19" height="387" fill="#f0f0f0"/>
<rect x="500.3" y="512.7" width="16.4" height="118" fill="#cdcdcd"/>
<polygon points="508.20,493.40 515.20,500.00 515.20,503.40 508.20,496.80 501.20,503.40 501.20,500.00" fill="#5a5a5a"/>
<polygon points="508.20,824.60 515.20,818.00 515.20,814.60 508.20,821.20 501.20,814.60 501.20,818.00" fill="#5a5a5a"/>
<rect x="9.5" y="844.3" width="489.5" height="17.5" fill="#f0f0f0"/>
<rect x="46.2" y="844.6" width="399.6" height="16.6" fill="#cdcdcd"/>
<polygon points="26.80,852.80 33.20,846.60 36.60,846.60 30.20,852.80 36.60,859.00 33.20,859.00" fill="#5a5a5a"/>
<polygon points="480.20,852.80 473.80,846.60 470.40,846.60 476.80,852.80 470.40,859.00 473.80,859.00" fill="#5a5a5a"/>
<rect x="537.5" y="451.5" width="16" height="16" rx="1.2" fill="url(#icbg)" stroke="#a7b5c8" stroke-width="1"/>
<rect x="538" y="466.4" width="15.5" height="1.6" fill="#3b5379"/>
<rect x="552.4" y="452.5" width="1.6" height="15" fill="#5a6f92"/>
<rect x="540" y="454.5" width="8" height="1.3" fill="#8a98aa"/><rect x="549.5" y="454.5" width="2" height="1.3" fill="#b05050"/>
<rect x="540" y="456.8" width="8" height="1.3" fill="#8a98aa"/><rect x="549.5" y="456.8" width="2" height="1.3" fill="#2a6a3a"/>
<rect x="542" y="462" width="2.5" height="4.5" fill="#3050a0"/><rect x="544.5" y="459" width="3" height="7.5" fill="#d8b050"/><rect x="547.5" y="460.5" width="3" height="6" fill="#b06030"/>
<text x="0" y="0" font-size="14" fill="#233b5a" transform="translate(560.6,464.6) scale(1.19,1)">Trend by Year Chart</text>
<rect x="537" y="474" width="488" height="1.3" fill="#cbcbcb"/>
<rect x="1025" y="446" width="23" height="29" fill="url(#ddg)"/>
<rect x="1025.5" y="446.5" width="22" height="28" fill="none" stroke="#d9d9d9" stroke-width="1"/>
<path d="M1033.30 459.28 L1039.70 459.28 L1036.50 463.28 Z" fill="#0f1f45"/>
<rect x="538.5" y="476.5" width="490.5" height="372.5" fill="#ffffff" stroke="#d6d6d6" stroke-width="1.2"/>
<rect x="1031.5" y="475.5" width="15.5" height="384" fill="#ffffff" stroke="#c5d0e2" stroke-width="1"/>
<rect x="1033" y="477" width="12.5" height="381" fill="#dadada"/>
<path d="M1041.6 663.5 L1037 667.5 L1041.6 671.5 Z" fill="#404040"/>
<line x1="590.5" y1="526.20" x2="1010" y2="526.20" stroke="#dadada" stroke-width="1.2"/>
<line x1="590.5" y1="588.20" x2="1010" y2="588.20" stroke="#dadada" stroke-width="1.2"/>
<line x1="590.5" y1="650.20" x2="1010" y2="650.20" stroke="#dadada" stroke-width="1.2"/>
<line x1="590.5" y1="712.20" x2="1010" y2="712.20" stroke="#dadada" stroke-width="1.2"/>
<line x1="585" y1="526.20" x2="590.5" y2="526.20" stroke="#111" stroke-width="1.2"/>
<text x="582.30" y="530.90" font-size="11.5" fill="#1a1a1a" stroke="#1a1a1a" stroke-width="0.18" text-anchor="end" >800</text>
<line x1="585" y1="588.20" x2="590.5" y2="588.20" stroke="#111" stroke-width="1.2"/>
<text x="582.30" y="592.90" font-size="11.5" fill="#1a1a1a" stroke="#1a1a1a" stroke-width="0.18" text-anchor="end" >600</text>
<line x1="585" y1="650.20" x2="590.5" y2="650.20" stroke="#111" stroke-width="1.2"/>
<text x="582.30" y="654.90" font-size="11.5" fill="#1a1a1a" stroke="#1a1a1a" stroke-width="0.18" text-anchor="end" >400</text>
<line x1="585" y1="712.20" x2="590.5" y2="712.20" stroke="#111" stroke-width="1.2"/>
<text x="582.30" y="716.90" font-size="11.5" fill="#1a1a1a" stroke="#1a1a1a" stroke-width="0.18" text-anchor="end" >200</text>
<line x1="585" y1="774.20" x2="590.5" y2="774.20" stroke="#111" stroke-width="1.2"/>
<text x="582.30" y="778.90" font-size="11.5" fill="#1a1a1a" stroke="#1a1a1a" stroke-width="0.18" text-anchor="end" >0</text>
<line x1="590.5" y1="526.20" x2="590.5" y2="778.5" stroke="#111" stroke-width="1.4"/>
<line x1="585" y1="774.20" x2="1010.5" y2="774.20" stroke="#111" stroke-width="1.4"/>
<line x1="1010" y1="774.20" x2="1010" y2="778.5" stroke="#111" stroke-width="1.2"/>
<line x1="622.30" y1="774.20" x2="622.30" y2="778.5" stroke="#111" stroke-width="1.2"/>
<text x="622.30" y="792.20" font-size="11.5" fill="#1a1a1a" stroke="#1a1a1a" stroke-width="0.18" text-anchor="middle" >J</text>
<line x1="654.60" y1="774.20" x2="654.60" y2="778.5" stroke="#111" stroke-width="1.2"/>
<text x="654.60" y="792.20" font-size="11.5" fill="#1a1a1a" stroke="#1a1a1a" stroke-width="0.18" text-anchor="middle" >F</text>
<line x1="686.90" y1="774.20" x2="686.90" y2="778.5" stroke="#111" stroke-width="1.2"/>
<text x="686.90" y="792.20" font-size="11.5" fill="#1a1a1a" stroke="#1a1a1a" stroke-width="0.18" text-anchor="middle" >M</text>
<line x1="719.20" y1="774.20" x2="719.20" y2="778.5" stroke="#111" stroke-width="1.2"/>
<text x="719.20" y="792.20" font-size="11.5" fill="#1a1a1a" stroke="#1a1a1a" stroke-width="0.18" text-anchor="middle" >A</text>
<line x1="751.50" y1="774.20" x2="751.50" y2="778.5" stroke="#111" stroke-width="1.2"/>
<text x="751.50" y="792.20" font-size="11.5" fill="#1a1a1a" stroke="#1a1a1a" stroke-width="0.18" text-anchor="middle" >M</text>
<line x1="783.80" y1="774.20" x2="783.80" y2="778.5" stroke="#111" stroke-width="1.2"/>
<text x="783.80" y="792.20" font-size="11.5" fill="#1a1a1a" stroke="#1a1a1a" stroke-width="0.18" text-anchor="middle" >J</text>
<line x1="816.10" y1="774.20" x2="816.10" y2="778.5" stroke="#111" stroke-width="1.2"/>
<text x="816.10" y="792.20" font-size="11.5" fill="#1a1a1a" stroke="#1a1a1a" stroke-width="0.18" text-anchor="middle" >J</text>
<line x1="848.40" y1="774.20" x2="848.40" y2="778.5" stroke="#111" stroke-width="1.2"/>
<text x="848.40" y="792.20" font-size="11.5" fill="#1a1a1a" stroke="#1a1a1a" stroke-width="0.18" text-anchor="middle" >A</text>
<line x1="880.70" y1="774.20" x2="880.70" y2="778.5" stroke="#111" stroke-width="1.2"/>
<text x="880.70" y="792.20" font-size="11.5" fill="#1a1a1a" stroke="#1a1a1a" stroke-width="0.18" text-anchor="middle" >S</text>
<line x1="913.00" y1="774.20" x2="913.00" y2="778.5" stroke="#111" stroke-width="1.2"/>
<text x="913.00" y="792.20" font-size="11.5" fill="#1a1a1a" stroke="#1a1a1a" stroke-width="0.18" text-anchor="middle" >O</text>
<line x1="945.30" y1="774.20" x2="945.30" y2="778.5" stroke="#111" stroke-width="1.2"/>
<text x="945.30" y="792.20" font-size="11.5" fill="#1a1a1a" stroke="#1a1a1a" stroke-width="0.18" text-anchor="middle" >N</text>
<line x1="977.60" y1="774.20" x2="977.60" y2="778.5" stroke="#111" stroke-width="1.2"/>
<text x="977.60" y="792.20" font-size="11.5" fill="#1a1a1a" stroke="#1a1a1a" stroke-width="0.18" text-anchor="middle" >D</text>
<polyline points="622.30,741.34 654.60,712.51 686.90,643.38 719.20,586.96 751.50,581.07 783.80,591.92 816.10,636.56 848.40,626.02 880.70,656.71 913.00,684.92 945.30,704.76 977.60,664.46" fill="none" stroke="#ff0000" stroke-width="2.3" stroke-linejoin="round"/>
<circle cx="622.30" cy="741.34" r="4" fill="#ff0000"/>
<circle cx="654.60" cy="712.51" r="4" fill="#ff0000"/>
<circle cx="686.90" cy="643.38" r="4" fill="#ff0000"/>
<circle cx="719.20" cy="586.96" r="4" fill="#ff0000"/>
<circle cx="751.50" cy="581.07" r="4" fill="#ff0000"/>
<circle cx="783.80" cy="591.92" r="4" fill="#ff0000"/>
<circle cx="816.10" cy="636.56" r="4" fill="#ff0000"/>
<circle cx="848.40" cy="626.02" r="4" fill="#ff0000"/>
<circle cx="880.70" cy="656.71" r="4" fill="#ff0000"/>
<circle cx="913.00" cy="684.92" r="4" fill="#ff0000"/>
<circle cx="945.30" cy="704.76" r="4" fill="#ff0000"/>
<circle cx="977.60" cy="664.46" r="4" fill="#ff0000"/>
<polyline points="622.30,741.96 654.60,737.93 686.90,657.02 719.20,605.56 751.50,608.35 783.80,592.85 816.10,663.53 848.40,623.23 880.70,647.10 913.00,675.31 945.30,711.89 977.60,691.43" fill="none" stroke="#ffa500" stroke-width="2.3" stroke-linejoin="round"/>
<circle cx="622.30" cy="741.96" r="4" fill="#ffa500"/>
<circle cx="654.60" cy="737.93" r="4" fill="#ffa500"/>
<circle cx="686.90" cy="657.02" r="4" fill="#ffa500"/>
<circle cx="719.20" cy="605.56" r="4" fill="#ffa500"/>
<circle cx="751.50" cy="608.35" r="4" fill="#ffa500"/>
<circle cx="783.80" cy="592.85" r="4" fill="#ffa500"/>
<circle cx="816.10" cy="663.53" r="4" fill="#ffa500"/>
<circle cx="848.40" cy="623.23" r="4" fill="#ffa500"/>
<circle cx="880.70" cy="647.10" r="4" fill="#ffa500"/>
<circle cx="913.00" cy="675.31" r="4" fill="#ffa500"/>
<circle cx="945.30" cy="711.89" r="4" fill="#ffa500"/>
<circle cx="977.60" cy="691.43" r="4" fill="#ffa500"/>
<polyline points="622.30,737.31 654.60,730.80 686.90,676.24 719.20,586.96 751.50,542.01 783.80,615.48 816.10,640.28 848.40,636.56 880.70,649.89 913.00,679.34 945.30,716.23 977.60,708.48" fill="none" stroke="#008000" stroke-width="2.3" stroke-linejoin="round"/>
<circle cx="622.30" cy="737.31" r="4" fill="#008000"/>
<circle cx="654.60" cy="730.80" r="4" fill="#008000"/>
<circle cx="686.90" cy="676.24" r="4" fill="#008000"/>
<circle cx="719.20" cy="586.96" r="4" fill="#008000"/>
<circle cx="751.50" cy="542.01" r="4" fill="#008000"/>
<circle cx="783.80" cy="615.48" r="4" fill="#008000"/>
<circle cx="816.10" cy="640.28" r="4" fill="#008000"/>
<circle cx="848.40" cy="636.56" r="4" fill="#008000"/>
<circle cx="880.70" cy="649.89" r="4" fill="#008000"/>
<circle cx="913.00" cy="679.34" r="4" fill="#008000"/>
<circle cx="945.30" cy="716.23" r="4" fill="#008000"/>
<circle cx="977.60" cy="708.48" r="4" fill="#008000"/>
<polyline points="622.30,749.40 654.60,740.10 686.90,681.82 719.20,622.61 751.50,587.58 783.80,605.87 816.10,611.14 848.40,612.69 880.70,683.37 913.00,695.77 945.30,718.09 977.60,681.20" fill="none" stroke="#0000ff" stroke-width="2.3" stroke-linejoin="round"/>
<circle cx="622.30" cy="749.40" r="4" fill="#0000ff"/>
<circle cx="654.60" cy="740.10" r="4" fill="#0000ff"/>
<circle cx="686.90" cy="681.82" r="4" fill="#0000ff"/>
<circle cx="719.20" cy="622.61" r="4" fill="#0000ff"/>
<circle cx="751.50" cy="587.58" r="4" fill="#0000ff"/>
<circle cx="783.80" cy="605.87" r="4" fill="#0000ff"/>
<circle cx="816.10" cy="611.14" r="4" fill="#0000ff"/>
<circle cx="848.40" cy="612.69" r="4" fill="#0000ff"/>
<circle cx="880.70" cy="683.37" r="4" fill="#0000ff"/>
<circle cx="913.00" cy="695.77" r="4" fill="#0000ff"/>
<circle cx="945.30" cy="718.09" r="4" fill="#0000ff"/>
<circle cx="977.60" cy="681.20" r="4" fill="#0000ff"/>
<polyline points="622.30,745.68 654.60,727.70 686.90,666.01 719.20,587.89" fill="none" stroke="#800080" stroke-width="2.3" stroke-linejoin="round"/>
<circle cx="622.30" cy="745.68" r="4" fill="#800080"/>
<circle cx="654.60" cy="727.70" r="4" fill="#800080"/>
<circle cx="686.90" cy="666.01" r="4" fill="#800080"/>
<circle cx="719.20" cy="587.89" r="4" fill="#800080"/>
<line x1="605.20" y1="822.2" x2="629.80" y2="822.2" stroke="#ff0000" stroke-width="2.2"/>
<circle cx="617.50" cy="822.2" r="2.8" fill="#ff0000"/>
<text x="635.00" y="827.50" font-size="12.2" fill="#1a1a1a" stroke="#1a1a1a" stroke-width="0.18" text-anchor="start" >2010</text>
<line x1="679.00" y1="822.2" x2="703.60" y2="822.2" stroke="#ffa500" stroke-width="2.2"/>
<circle cx="691.30" cy="822.2" r="2.8" fill="#ffa500"/>
<text x="708.80" y="827.50" font-size="12.2" fill="#1a1a1a" stroke="#1a1a1a" stroke-width="0.18" text-anchor="start" >2011</text>
<line x1="752.00" y1="822.2" x2="776.60" y2="822.2" stroke="#008000" stroke-width="2.2"/>
<circle cx="764.30" cy="822.2" r="2.8" fill="#008000"/>
<text x="781.80" y="827.50" font-size="12.2" fill="#1a1a1a" stroke="#1a1a1a" stroke-width="0.18" text-anchor="start" >2012</text>
<line x1="824.60" y1="822.2" x2="849.20" y2="822.2" stroke="#0000ff" stroke-width="2.2"/>
<circle cx="836.90" cy="822.2" r="2.8" fill="#0000ff"/>
<text x="854.40" y="827.50" font-size="12.2" fill="#1a1a1a" stroke="#1a1a1a" stroke-width="0.18" text-anchor="start" >2013</text>
<line x1="897.70" y1="822.2" x2="922.30" y2="822.2" stroke="#800080" stroke-width="2.2"/>
<circle cx="910.00" cy="822.2" r="2.8" fill="#800080"/>
<text x="927.50" y="827.50" font-size="12.2" fill="#1a1a1a" stroke="#1a1a1a" stroke-width="0.18" text-anchor="start" >2014</text>
</svg>
</body></html>
